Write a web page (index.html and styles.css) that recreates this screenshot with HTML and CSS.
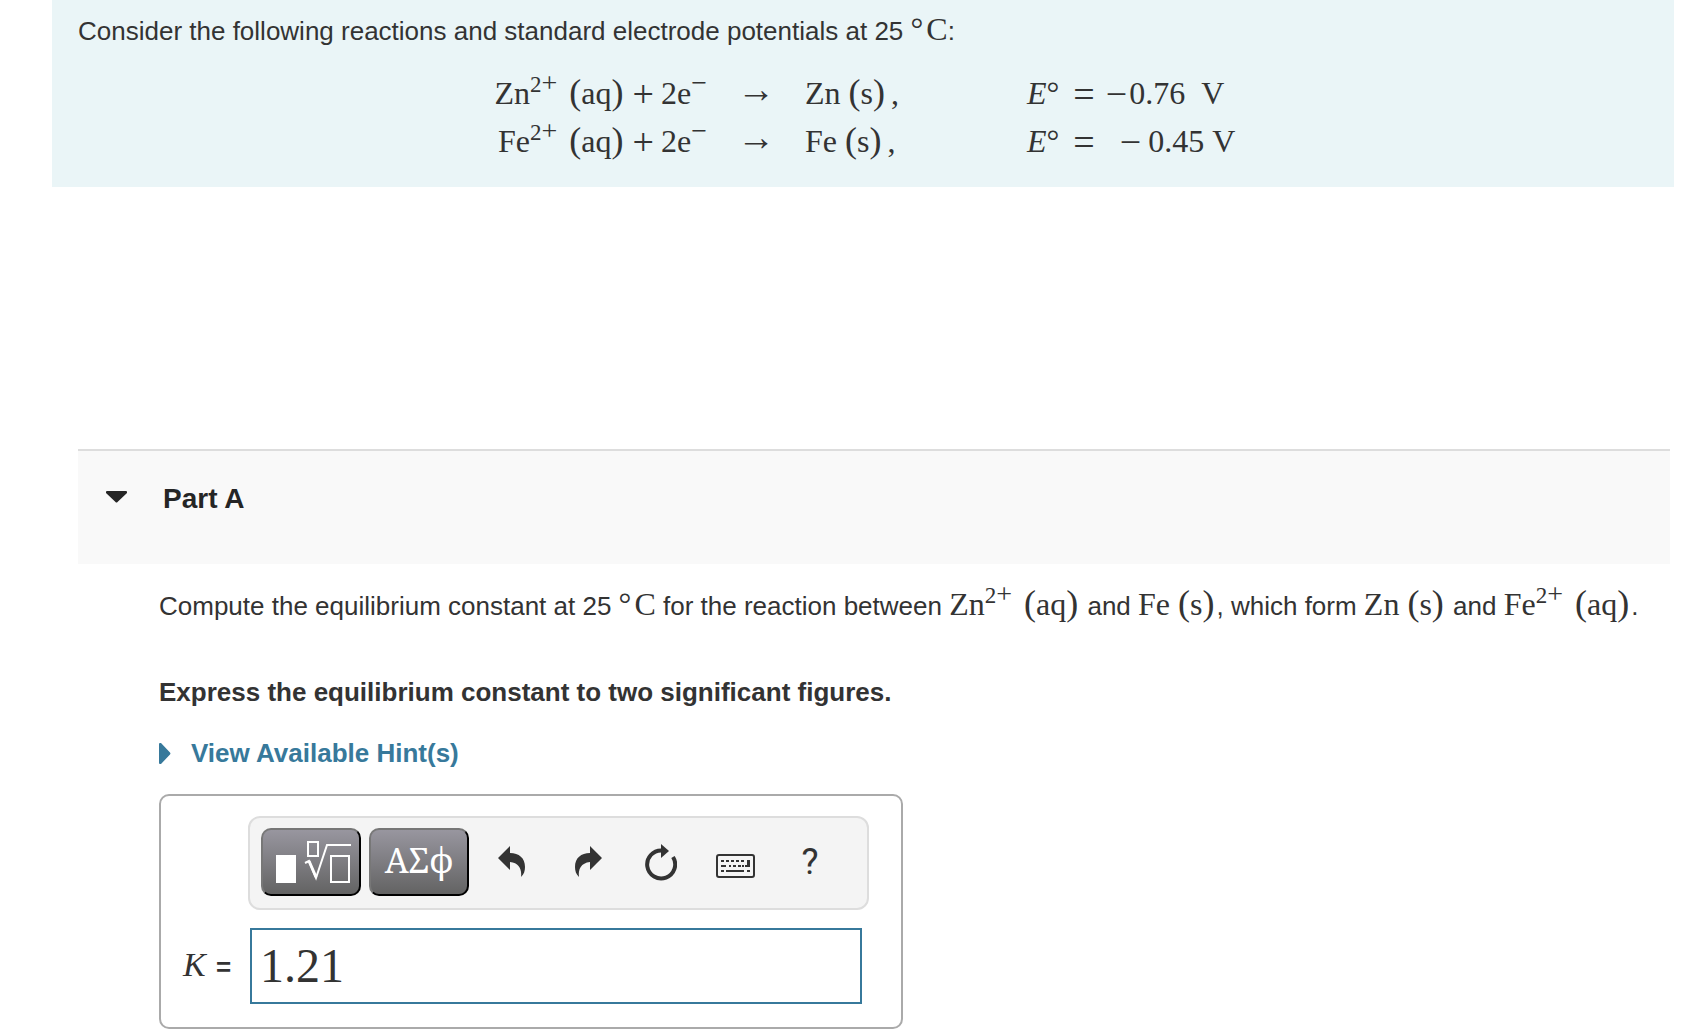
FILE: index.html
```html
<!DOCTYPE html>
<html lang="en">
<head>
    <meta charset="UTF-8">
    <meta name="viewport" content="width=device-width, initial-scale=1.0">
    <title>Equilibrium Constant</title>
    <link rel="stylesheet" href="styles.css">
</head>
<body>
    <section class="intro">
        <p>Consider the following reactions and standard electrode potentials at 25 <span class="math"><span class="degree">°</span>C</span>:</p>
        <div class="reactions math">
            <div class="left">Zn<sup>2<b>+</b></sup><span class="state wide"><i>(</i>aq<i>)</i></span><span class="op">+</span>2e<sup><b>−</b></sup></div>
            <div class="arrow">→</div>
            <div>Zn<span class="state"><i>(</i>s<i>)</i></span><span class="comma">,</span></div>
            <div><em>E</em><span class="degree">°</span><span class="op equals">=</span><span class="minus">−</span>0.76<span class="unit far">V</span></div>

            <div class="left">Fe<sup>2<b>+</b></sup><span class="state wide"><i>(</i>aq<i>)</i></span><span class="op">+</span>2e<sup><b>−</b></sup></div>
            <div class="arrow">→</div>
            <div>Fe<span class="state"><i>(</i>s<i>)</i></span><span class="comma">,</span></div>
            <div><em>E</em><span class="degree">°</span><span class="op equals">=</span><span class="op spaced">−</span>0.45<span class="unit">V</span></div>
        </div>
    </section>

    <section class="part">
        <header class="part-header">
            <svg class="caret" viewBox="0 0 21 12" aria-hidden="true"><path d="M1 0h19q1 0 1 1v1L11.500 11q-1 1-2 0L0 2V1q0-1 1-1z"/></svg>
            <h2>Part A</h2>
        </header>

        <div class="part-body">
            <p class="question">Compute the equilibrium constant at 25 <span class="math"><span class="degree">°</span>C</span> for the reaction between <span class="math">Zn<sup>2<b>+</b></sup><span class="state wide"><i>(</i>aq<i>)</i></span></span> and <span class="math">Fe<span class="state"><i>(</i>s<i>)</i></span></span>, which form <span class="math">Zn<span class="state"><i>(</i>s<i>)</i></span></span> and <span class="math">Fe<sup>2<b>+</b></sup><span class="state wide"><i>(</i>aq<i>)</i></span></span>.</p>
            <p class="instructions">Express the equilibrium constant to two significant figures.</p>
            <a class="hints" href="#">
                <svg viewBox="0 0 12 21" aria-hidden="true"><path d="M0 1q0-1 1-1h1L11 9.500q1 1 0 2L2 21H1q-1 0-1-1z"/></svg>
                View Available Hint(s)
            </a>

            <form class="answer">
                <div class="toolbar">
                    <button type="button" class="palette" aria-label="Templates">
                        <svg class="outline" width="80" height="44" viewBox="-4 0 80 44">
                            <path class="solid" d="M1 15h20v28H1z"/>
                            <path d="M33 2h10v14H33zM56 16h18v26H56z"/>
                            <path d="M30 23l4-2 7 17L52 5h24"/>
                            <path d="M34 21l7 16" stroke-width="3"/>
                        </svg>
                    </button>
                    <button type="button" class="palette greek">ΑΣϕ</button>
                    <button type="button" class="tool undo" aria-label="Undo">
                        <svg width="28" height="32" viewBox="0 0 28 32"><path d="M0 12L12 0v7c9 0 15 5 15 14 0 4-1 7-4 10 1-8-2-14-11-15v8z"/></svg>
                    </button>
                    <button type="button" class="tool redo" aria-label="Redo">
                        <svg width="28" height="32" viewBox="0 0 28 32"><path d="M27 12L15 0v7C6 7 0 12 0 21c0 4 1 7 4 10-1-8 2-14 11-15v8z"/></svg>
                    </button>
                    <button type="button" class="tool reset" aria-label="Reset">
                        <svg width="32" height="37" viewBox="0 0 32 37"><path d="M16 0l8 7-8 7z"/><path d="M17 6.500A14 14 0 1 0 28 13" fill="none" stroke="#333" stroke-width="4"/></svg>
                    </button>
                    <button type="button" class="tool keys" aria-label="Keyboard shortcuts">
                        <svg width="39" height="24" viewBox="0 0 39 24">
                            <rect x="1" y="1" width="37" height="22" rx="2" fill="none" stroke="#333" stroke-width="2"/>
                            <path d="M5 6h3v2H5zM10 6h3v2h-3zM15 6h3v2h-3zM20 6h3v2h-3zM25 6h3v2h-3zM31 6h3v7h-5v-2h2zM5 11h5v2H5zM13 11h2v2h-2zM17 11h3v2h-3zM22 11h3v2h-3zM26 11h2v2h-2zM5 16h3v2H5zM10 16h18v2H10zM31 16h3v2h-3z"/>
                        </svg>
                    </button>
                    <button type="button" class="tool help" aria-label="Help">?</button>
                </div>
                <div class="entry">
                    <label for="answer"><em>K</em> <span>=</span></label>
                    <input type="text" id="answer" name="answer" value="1.21">
                </div>
            </form>
        </div>
    </section>
</body>
</html>
```
FILE: styles.css
```css
* {
    box-sizing: border-box;
}

body {
    margin: 0;
    padding: 0 16px 0 52px;
    background-color: #fff;
    color: #333;
    font-family: "Liberation Sans", Arial, sans-serif;
    font-size: 26px;
    line-height: 32px;
}

p,
h2 {
    margin: 0;
}

svg {
    display: block;
    fill: currentColor;
}

.intro {
    padding: 13px 26px 22px;
    background-color: #eaf5f7;
}

/* Chemistry notation */
.math {
    font-family: "Liberation Serif", "Times New Roman", serif;
    font-size: 32px;
    line-height: 32px;
    white-space: nowrap;
}

.math sup {
    font-size: 23px;
    line-height: 0;
    vertical-align: 12px;
}

.math sup b {
    font-size: 28px;
    font-weight: normal;
}

.math i {
    font-size: 36px;
    font-style: normal;
    line-height: 0;
}

.degree {
    margin-right: 3px;
}

.state {
    margin: 0 2px 0 8px;
}

.state.wide {
    margin-left: 12px;
}

.op {
    margin: 0 7px;
    font-size: 38px;
    line-height: 0;
    vertical-align: -3px;
}

.op.equals {
    margin: 0 11px;
}

.op.spaced {
    margin-left: 14px;
}

.minus {
    margin-right: 2px;
    font-size: 38px;
    line-height: 0;
    vertical-align: -3px;
}

.comma {
    margin-left: 4px;
}

.unit {
    margin-left: 8px;
}

.unit.far {
    margin-left: 16px;
}

.reactions {
    display: grid;
    grid-template-columns: 214px 98px 222px 206px;
    justify-content: center;
    margin-top: 22px;
    line-height: 48px;
}

.left {
    text-align: right;
}

.arrow {
    font-size: 38px;
    line-height: 40px;
    text-align: center;
}

.part {
    margin: 262px 4px 0 26px;
}

.part-header {
    display: flex;
    align-items: flex-start;
    gap: 36px;
    height: 115px;
    padding: 32px 28px;
    border-top: 2px solid #ddd;
    background-color: #f9f9f9;
    color: #252525;
}

.part-header h2 {
    font-size: 28px;
    line-height: 32px;
}

.caret {
    width: 21px;
    height: 12px;
    margin-top: 8px;
}

.part-body {
    padding: 24px 0 0 81px;
}

.question {
    white-space: nowrap;
}

.instructions {
    margin-top: 54px;
    font-weight: bold;
}

.hints {
    display: flex;
    align-items: center;
    gap: 20px;
    width: fit-content;
    margin-top: 29px;
    color: #37799b;
    font-weight: bold;
    text-decoration: none;
}

.hints svg {
    width: 12px;
    height: 21px;
}

.answer {
    width: fit-content;
    margin-top: 25px;
    padding: 20px 32px 23px 18px;
    border: 2px solid #aaa;
    border-radius: 10px;
}

.toolbar {
    display: flex;
    align-items: center;
    margin-left: 69px;
    padding: 10px 48px 12px 11px;
    border: 2px solid #ddd;
    border-radius: 12px;
    background-color: #f4f4f4;
}

button {
    padding: 0;
    border: none;
    background: none;
    color: #333;
    font: inherit;
    cursor: pointer;
}

.palette {
    display: flex;
    align-items: center;
    justify-content: center;
    width: 100px;
    height: 68px;
    margin-right: 8px;
    border: 2px outset #777;
    border-color: #777 #222 #222 #777;
    border-radius: 10px;
    background: linear-gradient(#98969f, #636363);
    color: #fff;
}

.outline {
    fill: none;
    stroke: #fff;
    stroke-width: 2px;
}

.solid {
    fill: #fff;
    stroke: none;
}

.greek {
    padding-bottom: 4px;
    font-family: "Noto Serif", "Liberation Serif", serif;
    font-size: 34px;
}

.undo {
    margin-left: 21px;
}

.redo {
    margin-left: 49px;
}

.reset {
    margin-left: 42px;
}

.keys {
    margin: 8px 0 0 39px;
}

.help {
    width: 18px;
    margin-left: 46px;
    font-family: Roboto, sans-serif;
    font-size: 36px;
}

.entry {
    display: flex;
    align-items: center;
    margin-top: 18px;
}

.entry label {
    width: 71px;
    padding-left: 4px;
    white-space: nowrap;
}

.entry em {
    font-family: "Liberation Serif", serif;
    font-size: 34px;
}

.entry label span {
    margin-left: 3px;
    font-weight: bold;
}

.entry input {
    width: 612px;
    height: 76px;
    padding: 0 8px 2px;
    border: 2px solid #37799b;
    outline: none;
    color: #333;
    font-family: "Liberation Serif", "Times New Roman", serif;
    font-size: 48px;
}
```
